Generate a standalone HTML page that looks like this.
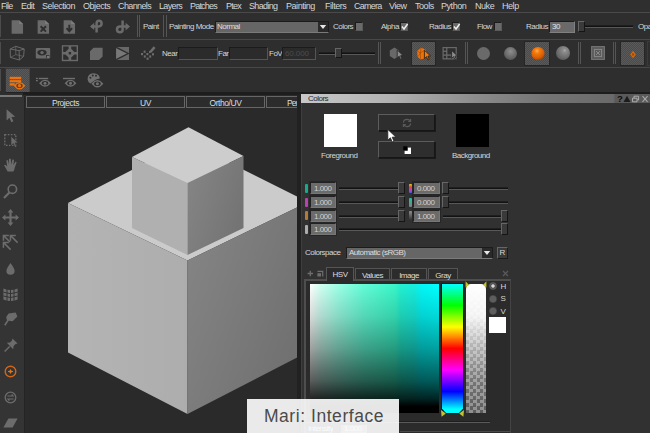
<!DOCTYPE html>
<html>
<head>
<meta charset="utf-8">
<title>Mari: Interface</title>
<style>
html,body{margin:0;padding:0;background:#2d2d2d;overflow:hidden;}
body{width:650px;height:433px;overflow:hidden;position:relative;font-family:"Liberation Sans",sans-serif;font-size:8px;color:#d6d6d6;letter-spacing:-0.5px;}
#app{position:absolute;left:0;top:0;width:650px;height:433px;overflow:hidden;background:#2e2e2e;}
.abs{position:absolute;}
.t{position:absolute;white-space:nowrap;line-height:11px;height:11px;}
#menubar .t{top:1px !important;font-size:9px;letter-spacing:-0.45px;}
#viewport .tab .t{font-size:8.5px;letter-spacing:-0.45px;}
.hl{position:absolute;height:1px;}
.vl{position:absolute;width:1px;}
.inp{position:absolute;box-sizing:border-box;background:#2b2b2b;border:1px solid #1b1b1b;border-bottom-color:#555;border-right-color:#555;}
.cb{position:absolute;box-sizing:border-box;width:8px;height:9px;background:#6a6a6a;border:1px solid #1c1c1c;border-right-color:#5a5a5a;border-bottom-color:#5a5a5a;}
.grip{position:absolute;width:1px;background:#555;box-shadow:2px 0 0 #555;}
.sel{position:absolute;box-sizing:border-box;background:repeating-conic-gradient(#5a5a5a 0% 25%,#4b4b4b 0% 50%) 0 0/2px 2px;border:1px solid #262626;}
.spin{position:absolute;box-sizing:border-box;background:#6b6b6b;border:1px solid #222;border-bottom-color:#777;border-right-color:#777;color:#e4e4e4;height:12px;line-height:10px;padding-left:3px;padding-top:1px;font-size:8px;letter-spacing:-0.5px;color:#d0d0d0;box-shadow:0 0 0 1px #262626;}
.trk{position:absolute;height:1px;background:#121212;box-shadow:0 -1px 0 rgba(0,0,0,0.350),0 1px 0 #585858;}
.hnd{position:absolute;box-sizing:border-box;width:7px;height:12px;background:#3a3a3a;border:1px solid #151515;border-left-color:#666;border-top-color:#666;}
.tab{position:absolute;box-sizing:border-box;border:1px solid #666;background:#2c2c2c;text-align:center;color:#ddd;}
</style>
</head>
<body>
<div id="app">

<!-- ============ MENU BAR ============ -->
<div id="menubar" class="abs" style="left:0;top:0;width:650px;height:12px;background:#2f2f2f;">
<span class="t" style="left:1px;top:0;letter-spacing:-0.75px">File</span>
<span class="t" style="left:21px;top:0;letter-spacing:-0.6px">Edit</span>
<span class="t" style="left:42px;top:0">Selection</span>
<span class="t" style="left:83px;top:0">Objects</span>
<span class="t" style="left:118px;top:0;letter-spacing:-0.62px">Channels</span>
<span class="t" style="left:159px;top:0;letter-spacing:-0.65px">Layers</span>
<span class="t" style="left:190px;top:0;letter-spacing:-0.8px">Patches</span>
<span class="t" style="left:226px;top:0;letter-spacing:-0.75px">Ptex</span>
<span class="t" style="left:249px;top:0;letter-spacing:-0.65px">Shading</span>
<span class="t" style="left:286px;top:0">Painting</span>
<span class="t" style="left:325px;top:0">Filters</span>
<span class="t" style="left:354px;top:0;letter-spacing:-0.75px">Camera</span>
<span class="t" style="left:389px;top:0">View</span>
<span class="t" style="left:415px;top:0">Tools</span>
<span class="t" style="left:441px;top:0">Python</span>
<span class="t" style="left:475px;top:0">Nuke</span>
<span class="t" style="left:502px;top:0">Help</span>
</div>
<div class="hl" style="left:0;top:12px;width:650px;background:#4a4a4a;"></div>

<!-- ============ TOOLBAR ROW 1 ============ -->
<div id="row1" class="abs" style="left:0;top:13px;width:650px;height:26px;background:#2e2e2e;">
 <div class="grip" style="left:0;top:2px;height:22px;box-shadow:none;background:#4c4c4c;"></div>
 <!-- doc icons -->
 <svg class="abs" style="left:10.3px;top:5.500px" width="15" height="16" viewBox="0 0 14 15"><path d="M1.5 1.2 H8.5 L12.2 4.8 V13.8 H1.5 Z" fill="#6a6a6a"/><path d="M8.5 1.2 V4.8 H12.2" fill="#7d7d7d"/></svg>
 <svg class="abs" style="left:36.3px;top:5.500px" width="15" height="16" viewBox="0 0 14 15"><path d="M1.5 1.2 H8.5 L12.2 4.8 V13.8 H1.5 Z" fill="#6a6a6a"/><path d="M8.5 1.2 V4.8 H12.2" fill="#7d7d7d"/><path d="M4.3 6.8 L9.3 11.8 M9.3 6.8 L4.3 11.8" stroke="#2e2e2e" stroke-width="1.8"/></svg>
 <svg class="abs" style="left:62.3px;top:5.500px" width="15" height="16" viewBox="0 0 14 15"><path d="M1.5 1.2 H8.5 L12.2 4.8 V13.8 H1.5 Z" fill="#6a6a6a"/><path d="M8.5 1.2 V4.8 H12.2" fill="#7d7d7d"/><path d="M6.8 5.5 V10.5 M4.2 8.6 L6.8 11.6 L9.4 8.6" stroke="#2e2e2e" stroke-width="1.8" fill="none"/></svg>
 <svg class="abs" style="left:89px;top:6px" width="15" height="15" viewBox="0 0 15 15"><path d="M7.6 13.5 V4.2 Q7.6 1.8 10 1.8 Q12.6 1.8 12.6 4.6 Q12.6 7.4 9.6 7.4 H2.2" stroke="#6a6a6a" stroke-width="2.500" fill="none"/><path d="M5.200 3.800 L1 7.400 L5.200 11 Z" fill="#6a6a6a"/></svg>
 <svg class="abs" style="left:114px;top:6px" width="17" height="15" viewBox="0 0 17 15"><path d="M8.6 1.5 V11 Q8.6 13.2 6 13.2 Q3 13.2 3 10.4 Q3 7.6 6 7.6 H13.5" stroke="#6a6a6a" stroke-width="2.500" fill="none"/><path d="M11.600 3.800 L16 7.600 L11.600 11.400 Z" fill="#6a6a6a"/></svg>
 <div class="grip" style="left:137px;top:2px;height:22px;"></div>
 <span class="t" style="left:143px;top:8px">Paint</span>
 <div class="grip" style="left:163px;top:2px;height:22px;box-shadow:3px 0 0 #555;"></div>
 <span class="t" style="left:169px;top:8px">Painting Mode</span>
 <div class="abs" style="left:215px;top:8px;width:114px;height:12px;box-sizing:border-box;background:#666;border:1px solid #1c1c1c;border-bottom-color:#7a7a7a;"></div>
 <span class="t" style="left:217px;top:8px;color:#ddd">Normal</span>
 <div class="abs" style="left:318px;top:9px;width:10px;height:10px;background:#2a2a2a;"></div>
 <svg class="abs" style="left:319px;top:11px" width="8" height="6" viewBox="0 0 8 6"><path d="M0.8 1 H7.2 L4 5 Z" fill="#e6e6e6"/></svg>
 <span class="t" style="left:333px;top:8px">Colors</span>
 <div class="cb" style="left:355px;top:9px"></div>
 <span class="t" style="left:381px;top:8px">Alpha</span>
 <div class="cb" style="left:400px;top:9px"></div>
 <svg class="abs" style="left:401px;top:10px" width="8" height="8" viewBox="0 0 8 8"><path d="M1 3.6 L3 6 L6.6 1" stroke="#eee" stroke-width="1.5" fill="none"/></svg>
 <span class="t" style="left:429px;top:8px">Radius</span>
 <div class="cb" style="left:452px;top:9px"></div>
 <svg class="abs" style="left:453px;top:10px" width="8" height="8" viewBox="0 0 8 8"><path d="M1 3.6 L3 6 L6.6 1" stroke="#eee" stroke-width="1.5" fill="none"/></svg>
 <span class="t" style="left:477px;top:8px">Flow</span>
 <div class="cb" style="left:494px;top:9px"></div>
 <span class="t" style="left:526px;top:8px">Radius</span>
 <div class="abs" style="left:549px;top:8px;width:26px;height:12px;box-sizing:border-box;background:#6a6a6a;border:1px solid #1c1c1c;border-bottom-color:#808080;border-right-color:#808080;"></div>
 <span class="t" style="left:552px;top:8px;color:#e2e2e2">30</span>
 <div class="trk" style="left:585px;top:13px;width:48px;"></div>
 <div class="hnd" style="left:578px;top:8px;height:11px;"></div>
 <span class="t" style="left:638px;top:8px;width:12px;overflow:hidden">Opa</span>
</div>
<div class="hl" style="left:0;top:39px;width:650px;background:#484848;"></div>

<!-- ============ TOOLBAR ROW 2 ============ -->
<div id="row2" class="abs" style="left:0;top:40px;width:650px;height:26px;background:#2e2e2e;">
 <div class="grip" style="left:0;top:2px;height:22px;box-shadow:none;background:#4c4c4c;"></div>
 <!-- wire cube -->
 <svg class="abs" style="left:8px;top:4px" width="19" height="19" viewBox="8 44 19 19"><g stroke="#6c6c6c" stroke-width="0.950" fill="none" stroke-linejoin="round"><path d="M15.700 46.300 L24.200 49 L19.100 50.600 L10.200 49 Z"/><path d="M10.200 49 L10.400 57.400 L19.400 60 L23.600 56.400 L24.200 49"/><path d="M19.100 50.600 L19.400 60"/><path d="M15.700 46.300 L15.800 54.600 L10.400 57.400 M15.800 54.600 L23.600 56.400" stroke-width="0.700"/></g></svg>
 <!-- camera eye -->
 <svg class="abs" style="left:35px;top:7px" width="16" height="13" viewBox="0 0 16 13"><rect x="0.8" y="1" width="14.4" height="10.6" rx="1" fill="#6a6a6a"/><ellipse cx="7" cy="5.6" rx="4.6" ry="2.8" fill="#2e2e2e"/><circle cx="7" cy="5.6" r="1.7" fill="#6a6a6a"/><rect x="11" y="8" width="3.4" height="3" fill="#2e2e2e"/><rect x="11.8" y="8.8" width="2.6" height="2.2" fill="#777"/></svg>
 <!-- frame icon -->
 <svg class="abs" style="left:60px;top:4px" width="20" height="19" viewBox="60 44 20 19"><rect x="61.800" y="45.200" width="16.200" height="16" fill="#6a6a6a"/><g fill="#2e2e2e"><path d="M63.200 46.600 H68.600 V48.800 L65.400 52 H63.200 Z"/><path d="M76.600 46.600 H71.200 V48.800 L74.400 52 H76.600 Z"/><path d="M63.200 59.800 H68.600 V57.600 L65.400 54.400 H63.200 Z"/><path d="M76.600 59.800 H71.200 V57.600 L74.400 54.400 H76.600 Z"/><rect x="68.700" y="52" width="2.400" height="2.400"/></g></svg>
 <!-- solid cube -->
 <svg class="abs" style="left:89px;top:7px" width="15" height="14" viewBox="0 0 15 14"><path d="M1 4.2 L4.6 0.8 H13.6 V9.4 L10 13 H1 Z" fill="#6a6a6a"/></svg>
 <!-- flag -->
 <svg class="abs" style="left:114px;top:5px" width="17" height="17" viewBox="114 45 17 17"><rect x="116.200" y="47" width="12.800" height="13" fill="#686868"/><path d="M116.200 47.800 L127.600 53.500 L116.200 59.200 Z" fill="#787878"/><path d="M116.200 47.400 L128.200 53.500 L116.200 59.600" stroke="#2e2e2e" stroke-width="1.400" fill="none"/></svg>
 <!-- dots brush -->
 <svg class="abs" style="left:139px;top:5px" width="18" height="17" viewBox="139 45 18 17"><g fill="#6c6c6c"><rect x="141" y="53" width="2" height="2.200"/><rect x="143.600" y="50.600" width="2" height="2.200"/><rect x="143.800" y="55.400" width="2" height="2.200"/><rect x="146.400" y="53" width="2" height="2.200"/><rect x="146.600" y="57.600" width="2" height="2.200"/><rect x="149.200" y="55.400" width="2" height="2.200"/><rect x="152" y="53.200" width="2" height="2.200"/><rect x="149" y="51" width="1.800" height="2"/></g><path d="M150.400 52 L154.600 47.200" stroke="#6c6c6c" stroke-width="2.600"/></svg>
 <span class="t" style="left:162px;top:8px">Near</span>
 <div class="inp" style="left:178px;top:7px;width:40px;height:13px;"></div>
 <span class="t" style="left:218px;top:8px">Far</span>
 <div class="inp" style="left:229px;top:7px;width:39px;height:13px;"></div>
 <span class="t" style="left:269px;top:8px">FoV</span>
 <div class="inp" style="left:282px;top:7px;width:34px;height:13px;"></div>
 <span class="t" style="left:285px;top:8px;color:#4c4c4c;letter-spacing:-0.1px">60.000</span>
 <div class="trk" style="left:319px;top:13px;width:56px;"></div>
 <div class="hnd" style="left:335px;top:8px;height:10px;"></div>
 <div class="grip" style="left:378px;top:2px;height:22px;"></div>
 <div class="sel" style="left:411px;top:1px;width:25px;height:25px;"></div>
 <div class="grip" style="left:465px;top:2px;height:22px;"></div>
 <div class="sel" style="left:524px;top:1px;width:26px;height:25px;"></div>
 <div class="grip" style="left:578px;top:2px;height:22px;"></div>
 <div class="grip" style="left:613px;top:2px;height:22px;"></div>
 <div class="sel" style="left:620px;top:1px;width:25px;height:25px;"></div>
 <div class="sel" style="left:647px;top:1px;width:3px;height:25px;background:#2e2e2e;border-color:#3a3a3a;border-right:none"></div>
 <!-- cursor icons -->
 <svg class="abs" style="left:385px;top:0" width="80" height="27" viewBox="385 40 80 27">
  <path d="M389.800 50.400 L394.400 47.400 L399 50.400 V56 L394.400 59 L389.800 56 Z" fill="#686868"/>
  <path d="M397.2 50.0 L397.2 58.0 L399.2 56.2 L400.6 59.5 L401.9 58.8 L400.6 55.7 L403.1 55.5 Z" fill="#8c8c8c" stroke="#2a2a2a" stroke-width="0.900"/>
  <path d="M417.200 51 L421 47.800 L425.500 49.400 L427 54 L425 58.200 L420.600 59.600 L417.600 57 Z" fill="#ec720c"/>
  <path d="M421 47.800 L420.400 53 L417.200 51 M420.400 53 L425.500 49.400 M420.400 53 L420.600 59.600 M420.400 53 L417.600 57" stroke="#9a4604" stroke-width="0.600" fill="none"/>
  <path d="M424.4 50.2 L424.4 58.6 L426.5 56.7 L427.9 60.1 L429.3 59.4 L427.9 56.1 L430.6 55.9 Z" fill="#f07a10" stroke="#3a2410" stroke-width="0.900"/>
  <rect x="442.500" y="47" width="14.300" height="12.500" fill="#686868"/>
  <g fill="#2e2e2e"><rect x="443.700" y="48.200" width="2.400" height="2.400"/><rect x="443.700" y="52" width="2.400" height="2.400"/><rect x="443.700" y="55.800" width="2.400" height="2.400"/><rect x="447.400" y="48.200" width="8.200" height="6.200"/><rect x="447.400" y="55.800" width="3.400" height="2.400"/></g>
  <path d="M451.6 50.4 L451.6 58.4 L453.6 56.6 L455.0 59.9 L456.3 59.2 L455.0 56.1 L457.5 55.9 Z" fill="#8c8c8c" stroke="#2a2a2a" stroke-width="0.900"/>
 </svg>
 <!-- spheres -->
 <svg class="abs" style="left:476px;top:6px" width="15" height="15" viewBox="0 0 15 15"><circle cx="7.5" cy="7.5" r="6.5" fill="#6a6a6a"/></svg>
 <svg class="abs" style="left:503px;top:6px" width="15" height="15" viewBox="0 0 15 15"><defs><radialGradient id="g2" cx="0.5" cy="0.35" r="0.65"><stop offset="0" stop-color="#8e8e8e"/><stop offset="1" stop-color="#565656"/></radialGradient></defs><circle cx="7.5" cy="7.5" r="6.5" fill="url(#g2)"/></svg>
 <svg class="abs" style="left:530px;top:6px" width="16" height="15" viewBox="0 0 16 15"><defs><radialGradient id="g3" cx="0.42" cy="0.3" r="0.7"><stop offset="0" stop-color="#ffb35a"/><stop offset="0.25" stop-color="#f57e10"/><stop offset="0.8" stop-color="#d85a00"/><stop offset="1" stop-color="#a84300"/></radialGradient></defs><circle cx="8" cy="7.5" r="6.6" fill="url(#g3)"/></svg>
 <svg class="abs" style="left:555px;top:5px" width="16" height="16" viewBox="0 0 16 16"><defs><radialGradient id="g4" cx="0.62" cy="0.32" r="0.7"><stop offset="0" stop-color="#acacac"/><stop offset="0.18" stop-color="#8c8c8c"/><stop offset="1" stop-color="#5c5c5c"/></radialGradient></defs><circle cx="8" cy="8" r="7" fill="url(#g4)"/></svg>
 <!-- square icon -->
 <svg class="abs" style="left:591px;top:6px" width="14" height="14" viewBox="0 0 14 14"><rect x="0.6" y="0.6" width="12.8" height="12.8" fill="#5a5a5a" stroke="#777" stroke-width="1"/><rect x="3.4" y="3.4" width="7.2" height="7.2" fill="none" stroke="#888" stroke-width="1"/><path d="M5 5 L9 9 M9 5 L5 9" stroke="#888" stroke-width="1"/></svg>
 <svg class="abs" style="left:629px;top:10px" width="8" height="9" viewBox="0 0 8 9"><path d="M4 0.800 L6.800 4.500 L4 8.200 L1.200 4.500 Z" fill="#d8680a"/><path d="M4 2.800 L5.200 4.500 L4 6.200 L2.800 4.500 Z" fill="#9a4a0a"/></svg>
</div>
<div class="hl" style="left:0;top:67px;width:650px;background:#484848;z-index:5;"></div>

<!-- ============ TOOLBAR ROW 3 ============ -->
<div id="row3" class="abs" style="left:0;top:67px;width:650px;height:27px;background:#2e2e2e;">
 <div class="grip" style="left:0;top:2px;height:22px;box-shadow:none;background:#4c4c4c;"></div>
 <div class="sel" style="left:5px;top:1px;width:25px;height:25px;border-color:#3a3a3a #444 #222 #333;"></div>
 <svg class="abs" style="left:0;top:0" width="120" height="27" viewBox="0 67 120 27">
  <g fill="#ee730e"><rect x="9.700" y="76.800" width="11.500" height="2.400"/><rect x="9.700" y="80.100" width="11.500" height="2.200"/><rect x="9.700" y="83.200" width="5" height="2.400"/></g>
  <path d="M13.7 85.7 Q19.5 78.3 25.3 85.7 Q19.5 93.10000000000001 13.7 85.7 Z" fill="#ee730e"/><ellipse cx="19.5" cy="85.7" rx="3.19" ry="2.29" fill="#6a3a14"/><circle cx="19.5" cy="85.7" r="1.6" fill="#ee730e"/>
  <g fill="#707070"><rect x="36" y="77.800" width="1.800" height="1.300"/><rect x="36" y="80" width="1.800" height="1.300"/><rect x="38.800" y="77.800" width="9.400" height="1.400"/></g>
  <path d="M39.1 83.2 Q45 76.3 50.9 83.2 Q45 90.10000000000001 39.1 83.2 Z" fill="#707070"/><ellipse cx="45" cy="83.2" rx="3.25" ry="2.14" fill="#2e2e2e"/><circle cx="45" cy="83.2" r="1.5" fill="#707070"/>
  <rect x="63" y="77.800" width="12" height="1.400" fill="#707070"/>
  <path d="M64.6 83.2 Q70.5 76.3 76.4 83.2 Q70.5 90.10000000000001 64.6 83.2 Z" fill="#707070"/><ellipse cx="70.5" cy="83.2" rx="3.25" ry="2.14" fill="#2e2e2e"/><circle cx="70.5" cy="83.2" r="1.5" fill="#707070"/>
  <path d="M87.600 79.600 Q87.400 73.600 93.400 73.200 Q99.600 73.400 99.800 78.600 L96 79.600 L92.400 82 L90.400 83.400 Q88 82.600 87.600 79.600 Z" fill="#707070"/>
  <g fill="#2e2e2e"><circle cx="90.400" cy="77.800" r="1"/><circle cx="92.800" cy="75.600" r="1"/><circle cx="96" cy="75.800" r="1"/></g>
  <path d="M91.4 83.8 Q97.4 76.39999999999999 103.4 83.8 Q97.4 91.2 91.4 83.8 Z" fill="#707070"/><ellipse cx="97.4" cy="83.8" rx="3.30" ry="2.29" fill="#2e2e2e"/><circle cx="97.4" cy="83.8" r="1.5" fill="#707070"/>
 </svg>
 <div class="abs" style="left:0;top:28px;width:22px;height:2px;background:#787878;z-index:6;"></div>
</div>
</div>
</div>

<div class="abs" style="left:23px;top:92px;width:627px;height:3px;background:#1d1d1d;"></div>
<!-- ============ VIEWPORT ============ -->
<div id="viewport" class="abs" style="left:25px;top:95px;width:276px;height:338px;background:#2a2a2a;overflow:hidden;">
 <svg class="abs" style="left:-25px;top:-95px" width="650" height="433" viewBox="0 0 650 433">
  <defs>
   <linearGradient id="rf" x1="0" y1="0" x2="1" y2="0.6"><stop offset="0" stop-color="#868686"/><stop offset="1" stop-color="#707070"/></linearGradient>
   <linearGradient id="rf2" x1="0" y1="0" x2="1" y2="0.5"><stop offset="0" stop-color="#868686"/><stop offset="1" stop-color="#747474"/></linearGradient>
   <linearGradient id="lf" x1="0" y1="0" x2="1" y2="0"><stop offset="0" stop-color="#b4b4b4"/><stop offset="1" stop-color="#adadad"/></linearGradient>
  </defs>
  <!-- big cube -->
  <path d="M68 203 L187 141.500 L308 202 L187.500 260.5 Z" fill="#cbcbcb"/>
  <path d="M68 203 L187.500 260.500 L187.5 414 L68 352.500 Z" fill="url(#lf)"/>
  <path d="M187.500 260.500 L308 202 L308 352 L187.500 414 Z" fill="url(#rf)"/>
  <!-- small cube -->
  <path d="M188.500 127.300 L243.500 156 L187.500 183 L132 157 Z" fill="#cdcdcd"/>
  <path d="M132 157 L187.500 183 L187.500 255 L132 228 Z" fill="#b0b0b0"/>
  <path d="M187.500 183 L243.500 156 L243.500 228 L187.500 255 Z" fill="url(#rf2)"/>
 </svg>
 <!-- tabs -->
 <div class="tab" style="left:1px;top:1px;width:79px;height:12px;"><span class="t" style="left:0;width:77px;top:1px;text-align:center">Projects</span></div>
 <div class="tab" style="left:81px;top:1px;width:79px;height:12px;"><span class="t" style="left:0;width:77px;top:1px;text-align:center">UV</span></div>
 <div class="tab" style="left:161px;top:1px;width:79px;height:12px;"><span class="t" style="left:0;width:77px;top:1px;text-align:center">Ortho/UV</span></div>
 <div class="tab" style="left:241px;top:1px;width:79px;height:12px;"><span class="t" style="left:20px;top:1px;letter-spacing:-0.800px">Persp</span></div>
</div>

<!-- ============ LEFT TOOLBAR ============ -->
<div id="lefttb" class="abs" style="left:0;top:96px;width:24px;height:337px;background:#343434;">
 <div class="vl" style="left:24px;top:0;height:337px;background:#242424;"></div>
 <!-- arrow y=115 -->
 <svg class="abs" style="left:4px;top:12px" width="14" height="16" viewBox="0 0 14 16"><path d="M2.6 1.2 L2.6 12.4 L5.4 9.8 L7.4 14.2 L9.4 13.3 L7.4 9 L11.2 8.800 Z" fill="#6c6c6c"/></svg>
 <!-- marquee y=140 -->
 <svg class="abs" style="left:2px;top:36px" width="17" height="17" viewBox="0 0 17 17"><rect x="2.800" y="2.600" width="11" height="10.800" fill="none" stroke="#6c6c6c" stroke-width="1.300" stroke-dasharray="1.600 1.400"/><path d="M9 4.200 L9 13.800 L11.300 11.600 L13 15.400 L14.700 14.600 L13 10.900 L16.200 10.700 Z" fill="#6c6c6c" stroke="#343434" stroke-width="0.600"/></svg>
 <!-- hand y=165 -->
 <svg class="abs" style="left:3px;top:61px" width="16" height="16" viewBox="0 0 16 16"><path d="M4.6 14.400 Q2.600 11 1.200 8.600 Q1.400 7.400 2.800 8 L4.200 9.600 L3.400 3.600 Q4.200 2.600 5 3.600 L5.800 7.600 L6 2 Q7 1 7.800 2 L8.200 7.400 L9.400 2.600 Q10.400 2 11 3 L10.400 8 L12.400 4.800 Q13.400 4.600 13.600 5.600 L11.800 10.400 Q11.400 13 10.400 14.400 Z" fill="#6c6c6c"/></svg>
 <!-- magnifier y=191 -->
 <svg class="abs" style="left:2px;top:87px" width="17" height="17" viewBox="0 0 17 17"><circle cx="10.400" cy="6.200" r="4.200" fill="none" stroke="#6c6c6c" stroke-width="1.600"/><path d="M7.400 9.400 L2 15" stroke="#6c6c6c" stroke-width="2.200"/></svg>
 <!-- move y=217 -->
 <svg class="abs" style="left:1px;top:112px" width="19" height="19" viewBox="0 0 19 19"><path d="M9.500 1 L12.400 4.400 H10.600 V8.400 H14.600 V6.600 L18 9.500 L14.600 12.400 V10.600 H10.600 V14.600 H12.400 L9.500 18 L6.600 14.600 H8.400 V10.600 H4.400 V12.400 L1 9.500 L4.400 6.600 V8.400 H8.400 V4.400 H6.600 Z" fill="#6c6c6c"/></svg>
 <!-- multi arrows y=242 -->
 <svg class="abs" style="left:2px;top:138px" width="17" height="17" viewBox="0 0 17 17"><g stroke="#6c6c6c" stroke-width="1.500" fill="none"><path d="M1.400 6.800 V1.400 H6.800 M1.600 1.600 L8 8"/><path d="M8.400 6.800 V1.400 H13.800 M8.600 1.600 L15.600 8.600"/><path d="M1.400 13.800 V8.400 H6.800 M1.600 8.600 L8.600 15.600"/></g></svg>
 <!-- drop y=269 -->
 <svg class="abs" style="left:5px;top:166px" width="11" height="14" viewBox="0 0 11 14"><path d="M5.500 1 Q9.600 6.600 9.600 9 Q9.600 12.800 5.500 12.800 Q1.400 12.800 1.400 9 Q1.400 6.600 5.500 1 Z" fill="#6c6c6c"/></svg>
 <!-- grid y=294 -->
 <svg class="abs" style="left:2px;top:190px" width="17" height="17" viewBox="0 0 17 17"><path d="M1.400 2.400 Q8.500 5.400 15.600 2.400 V13.600 Q8.500 16.600 1.400 13.600 Z" fill="#6c6c6c"/><g stroke="#343434" stroke-width="1" fill="none"><path d="M1.400 6.200 Q8.500 9.200 15.600 6.200 M1.400 10 Q8.500 13 15.600 10 M5 3 V15 M8.500 3.600 V15.600 M12 3 V15"/></g></svg>
 <!-- paint tag y=319 -->
 <svg class="abs" style="left:3px;top:215px" width="16" height="16" viewBox="0 0 16 16"><path d="M5.600 2.400 L12.600 1.400 L14.400 5.600 L9.600 10.200 L4 9.600 L3.200 6 Z" fill="#6c6c6c"/><path d="M5.200 9 L1.800 14.200" stroke="#6c6c6c" stroke-width="1.600"/></svg>
 <!-- pin y=345 -->
 <svg class="abs" style="left:3px;top:241px" width="16" height="16" viewBox="0 0 16 16"><path d="M9.400 1.400 L14.600 6.600 L12.600 7 L10.600 9 L10.200 12.200 L3.800 5.800 L7 5.400 L9 3.400 Z" fill="#6c6c6c"/><path d="M6.600 9.400 L1.600 14.400" stroke="#6c6c6c" stroke-width="1.400"/></svg>
 <!-- orange circle y=371 -->
 <svg class="abs" style="left:3px;top:268px" width="15" height="15" viewBox="0 0 15 15"><circle cx="7.500" cy="7.500" r="5.300" fill="none" stroke="#d0661a" stroke-width="1.400"/><path d="M7.500 5 L9 7.500 L7.500 10 L6 7.500 Z" fill="#e8710c"/><path d="M5 7.500 H10" stroke="#e8710c" stroke-width="1"/></svg>
 <!-- gray circle y=397 -->
 <svg class="abs" style="left:3px;top:294px" width="15" height="15" viewBox="0 0 15 15"><circle cx="7.500" cy="7.500" r="5.300" fill="none" stroke="#6c6c6c" stroke-width="1.300"/><path d="M4.400 6 H10 L8.600 4.400 M10.600 9 H5 L6.400 10.600" stroke="#6c6c6c" stroke-width="1.200" fill="none"/></svg>
 <!-- eraser y=423 -->
 <svg class="abs" style="left:2px;top:321px" width="17" height="12" viewBox="0 0 17 12"><path d="M6.400 1.400 H15.600 L10.600 10.600 H1.400 Z" fill="#6c6c6c"/></svg>
</div>

<!-- ============ COLORS PANEL ============ -->
<div id="colors" class="abs" style="left:296px;top:93px;width:354px;height:340px;">
 <div class="abs" style="left:1px;top:1px;width:353px;height:339px;background:#313131;"></div>
 <div class="abs" style="left:1px;top:1px;width:4px;height:339px;background:#212121;"></div>
 <div class="vl" style="left:5px;top:1px;height:339px;background:#3e3e3e;"></div>
 <!-- title bar -->
 <div class="abs" style="left:5px;top:1px;width:349px;height:9px;background:linear-gradient(90deg,#c8c8c8 0%,#b2b2b2 25%,#8c8c8c 50%,#747474 70%,#6a6a6a 89.500%,#5a5a5a 90%,#5a5a5a 100%);"></div>
 <span class="t" style="left:12px;top:0;color:#2a2a2a;">Colors</span>
 <span class="t" style="left:321px;top:0;color:#0c0c0c;font-weight:bold;font-size:9.500px;letter-spacing:0">?</span>
 <svg class="abs" style="left:327px;top:2px" width="26" height="8" viewBox="0 0 26 8"><path d="M0.500 7 L4 0.800 L7.500 7 Z" fill="#1c1c1c"/><g stroke="#b4b4b4" stroke-width="0.900" fill="none"><path d="M9.500 3.200 H14 V6.800 H9.500 Z M11 3 V1.200 H15.600 V5 H14.200"/><path d="M19.500 1.200 L24.600 6.800 M24.600 1.200 L19.500 6.800" stroke="#a8a8a8" stroke-width="1.100"/></g></svg>
 <!-- swatches -->
 <div class="abs" style="left:28px;top:21px;width:33px;height:33px;background:#fff;"></div>
 <span class="t" style="left:25px;top:57px;">Foreground</span>
 <div class="abs" style="left:160px;top:21px;width:33px;height:33px;background:#000;"></div>
 <span class="t" style="left:156px;top:57px;">Background</span>
 <div class="abs" style="left:82px;top:21px;width:57px;height:17px;box-sizing:border-box;background:#2e2e2e;border:1px solid #5c5c5c;border-right-color:#161616;border-bottom-color:#161616;box-shadow:1px 1px 0 #1a1a1a;"></div>
 <div class="abs" style="left:82px;top:48px;width:57px;height:17px;box-sizing:border-box;background:#2e2e2e;border:1px solid #5c5c5c;border-right-color:#161616;border-bottom-color:#161616;box-shadow:1px 1px 0 #1a1a1a;"></div>
 <svg class="abs" style="left:106px;top:25px" width="10" height="10" viewBox="0 0 10 10"><g stroke="#5a5a5a" stroke-width="1.200" fill="none"><path d="M1.400 4.600 Q1.600 1.600 5 1.400 Q7.400 1.400 8.400 3.200 M8.600 5.400 Q8.400 8.400 5 8.600 Q2.600 8.600 1.600 6.800"/><path d="M8.600 1 V3.400 H6.200 M1.400 9 V6.600 H3.800"/></g></svg>
 <svg class="abs" style="left:106px;top:52px" width="10" height="10" viewBox="0 0 10 10"><rect x="2.600" y="2.600" width="6.400" height="6.400" fill="#fff"/><rect x="1" y="1" width="4.600" height="4.600" fill="#000" stroke="#2d2d2d" stroke-width="0.600"/></svg>
 <!-- cursor -->
 <svg class="abs" style="left:90px;top:35px" width="12" height="16" viewBox="0 0 12 16"><path d="M1.800 1.400 L1.800 12.200 L4.400 9.800 L6.200 14 L8 13.200 L6.200 9.200 L9.800 9 Z" fill="#fff" stroke="#222" stroke-width="0.800"/></svg>
 <!-- sliders -->
 <div class="abs" style="left:9px;top:90px;width:3px;height:9px;border-radius:1px;margin-top:0.500px;background:#1aa98a;"></div>
 <div class="spin" style="left:14px;top:89px;width:26px;">1.000</div>
 <div class="trk" style="left:43px;top:95px;width:62px;"></div>
 <div class="hnd" style="left:102px;top:89px;"></div>
 <div class="abs" style="left:9px;top:104px;width:3px;height:9px;border-radius:1px;margin-top:0.500px;background:#b843b0;"></div>
 <div class="spin" style="left:14px;top:103px;width:26px;">1.000</div>
 <div class="trk" style="left:43px;top:109px;width:62px;"></div>
 <div class="hnd" style="left:102px;top:103px;"></div>
 <div class="abs" style="left:9px;top:117.5px;width:3px;height:9px;border-radius:1px;margin-top:0.500px;background:#b47a3a;"></div>
 <div class="spin" style="left:14px;top:116.5px;width:26px;">1.000</div>
 <div class="trk" style="left:43px;top:122.5px;width:62px;"></div>
 <div class="hnd" style="left:102px;top:116.5px;"></div>
 <div class="abs" style="left:9px;top:131px;width:3px;height:9px;border-radius:1px;margin-top:0.500px;background:#acacac;"></div>
 <div class="spin" style="left:14px;top:130px;width:26px;">1.000</div>
 <div class="trk" style="left:43px;top:136px;width:165px;"></div>
 <div class="hnd" style="left:205px;top:130px;"></div>
 <div class="abs" style="left:113px;top:90px;width:3px;height:9px;border-radius:1px;margin-top:0.500px;background:linear-gradient(#e8d020,#e04040,#c040d0,#4060e0);"></div>
 <div class="spin" style="left:117px;top:89px;width:27px;">0.000</div>
 <div class="trk" style="left:152px;top:95px;width:60px;"></div>
 <div class="hnd" style="left:146px;top:89px;"></div>
 <div class="abs" style="left:113px;top:104px;width:3px;height:9px;border-radius:1px;margin-top:0.500px;background:linear-gradient(#20c0a0,#808080);"></div>
 <div class="spin" style="left:117px;top:103px;width:27px;">0.000</div>
 <div class="trk" style="left:152px;top:109px;width:60px;"></div>
 <div class="hnd" style="left:146px;top:103px;"></div>
 <div class="abs" style="left:113px;top:117.5px;width:3px;height:9px;border-radius:1px;margin-top:0.500px;background:linear-gradient(#909090,#303030);"></div>
 <div class="spin" style="left:117px;top:116.5px;width:27px;">1.000</div>
 <div class="trk" style="left:147px;top:122.5px;width:60px;"></div>
 <div class="hnd" style="left:205px;top:116.5px;"></div>

 <!-- colorspace -->
 <span class="t" style="left:9px;top:154px;">Colorspace</span>
 <div class="abs" style="left:50px;top:154px;width:147px;height:12px;box-sizing:border-box;background:#666;border:1px solid #1c1c1c;border-bottom-color:#7a7a7a;"></div>
 <span class="t" style="left:53px;top:154px;color:#ddd">Automatic (sRGB)</span>
 <div class="abs" style="left:186px;top:155px;width:10px;height:10px;background:#2a2a2a;"></div>
 <svg class="abs" style="left:187px;top:157px" width="8" height="6" viewBox="0 0 8 6"><path d="M0.800 1 H7.200 L4 5 Z" fill="#e6e6e6"/></svg>
 <div class="abs" style="left:201px;top:154px;width:11px;height:12px;box-sizing:border-box;background:#3a3a3a;border:1px solid #666;border-right-color:#1a1a1a;border-bottom-color:#1a1a1a;"></div>
 <span class="t" style="left:203.5px;top:154px;">R</span>
 <!-- tabs -->
 <svg class="abs" style="left:11px;top:177px" width="18" height="8" viewBox="0 0 18 8"><path d="M3.300 0.800 V6.200 M0.600 3.500 H6" stroke="#6e6e6e" stroke-width="1.300" fill="none"/><path d="M10.500 1.300 H15.700 V6.500" stroke="#6e6e6e" stroke-width="1.200" fill="none"/><rect x="10.400" y="3.200" width="3.600" height="3.300" fill="#6e6e6e"/></svg>
 <div class="abs" style="left:8px;top:186px;width:207px;height:154px;box-sizing:border-box;border:2px solid #4e4e4e;border-right:1px solid #444;border-bottom:none;background:#2b2b2b;"></div>
 <div class="tab" style="left:30px;top:174px;width:28px;height:14px;background:#2b2b2b;border-color:#565656;border-bottom:none;"><span class="t" style="left:0;width:26px;top:1px;text-align:center">HSV</span></div>
 <div class="tab" style="left:59px;top:175px;width:35px;height:11px;border-color:#545454;border-bottom:none;"><span class="t" style="left:0;width:33px;top:1px;text-align:center">Values</span></div>
 <div class="tab" style="left:95px;top:175px;width:36px;height:11px;border-color:#545454;border-bottom:none;"><span class="t" style="left:0;width:34px;top:1px;text-align:center">Image</span></div>
 <div class="tab" style="left:132px;top:175px;width:30px;height:11px;border-color:#545454;border-bottom:none;"><span class="t" style="left:0;width:28px;top:1px;text-align:center">Gray</span></div>
 <svg class="abs" style="left:206px;top:177px" width="7" height="7" viewBox="0 0 7 7"><path d="M1 1 L6 6 M6 1 L1 6" stroke="#5a5a5a" stroke-width="1.200"/></svg>
 <!-- SV square -->
 <div class="abs" style="left:14px;top:191px;width:129px;height:129px;background:linear-gradient(to bottom,rgba(0,0,0,0) 0%,rgba(0,0,0,0.150) 25%,rgba(0,0,0,0.370) 50%,rgba(0,0,0,0.640) 75%,rgba(0,0,0,0.860) 89%,rgba(0,0,0,1) 95%),linear-gradient(to right,#ffffff 0%,#d0fff2 8%,#9cffe6 22%,#62fcd6 42%,#3af6c8 66%,#24f0d0 70%,#16eede 81%,#04f6f6 86%,#00ffff 100%);"></div>
 <!-- hue strip -->
 <div class="abs" style="left:145px;top:190px;width:23px;height:131px;background:#1c1c1c;clip-path:polygon(0 0,100% 0,100% 96.500%,82% 100%,18% 100%,0 96.500%);"></div>
 <div class="abs" style="left:146px;top:191px;width:21px;height:129px;background:linear-gradient(to bottom,#00ffff 0%,#00ff00 16.600%,#ffff00 33.300%,#ff0000 50%,#ff00ff 66.600%,#0000ff 83.300%,#00ffff 97%,#00ffff 100%);clip-path:polygon(0 0,100% 0,100% 96.500%,81% 100%,19% 100%,0 96.500%);"></div>
 <svg class="abs" style="left:144px;top:315px" width="25" height="10" viewBox="440 408 25 10"><path d="M441 410 L445.800 413.600 L441.600 416.800 Z M464 410 L459.200 413.600 L463.400 416.800 Z" fill="#c4c428"/></svg>
 <!-- alpha strip -->
 <div class="abs" style="left:170px;top:191px;width:20px;height:129px;border-radius:5px 5px 0 0;background:linear-gradient(to bottom,rgba(255,255,255,1) 0%,rgba(255,255,255,0.920) 25%,rgba(255,255,255,0.500) 50%,rgba(255,255,255,0.160) 75%,rgba(255,255,255,0) 100%),repeating-conic-gradient(#909090 0% 25%,#5c5c5c 0% 50%) 0 0/7px 7px;"></div>
 <svg class="abs" style="left:168px;top:187px" width="25" height="9" viewBox="464 280 25 9"><path d="M465.600 281.200 L469 285 L465.600 287.400 Z M486.400 281.200 L483 285 L486.400 287.400 Z" fill="#c4c428"/></svg>
 <!-- radios -->
 <div class="abs" style="left:193px;top:189px;width:8px;height:8px;border-radius:50%;background:radial-gradient(circle at 50% 50%,#e0e0e0 0,#d0d0d0 1.300px,#4a4a4a 2.200px,#606060 3.200px,#3c3c3c 4px);"></div>
 <div class="abs" style="left:193px;top:202px;width:8px;height:8px;border-radius:50%;background:radial-gradient(circle at 50% 50%,#5e5e5e 0,#5e5e5e 2.800px,#3c3c3c 4px);"></div>
 <div class="abs" style="left:193px;top:214px;width:8px;height:8px;border-radius:50%;background:radial-gradient(circle at 50% 50%,#5e5e5e 0,#5e5e5e 2.800px,#3c3c3c 4px);"></div>
 <span class="t" style="left:204.5px;top:188px;">H</span>
 <span class="t" style="left:204.5px;top:200px;">S</span>
 <span class="t" style="left:204.5px;top:213px;">V</span>
 <div class="abs" style="left:193px;top:224px;width:17px;height:16px;background:#fff;"></div>
 <div class="hl" style="left:10px;top:329px;width:184px;background:#5a5a5a;box-shadow:0 -1px 0 #1e1e1e;"></div>
 <div class="hl" style="left:104px;top:338px;width:110px;background:#4a4a4a;"></div>
 <span class="t" style="left:12px;top:330px;height:10px;overflow:hidden">Intensity</span>
 <div class="spin" style="left:44px;top:331px;width:27px;height:9px;line-height:8px;padding-top:0;overflow:hidden">1.000</div>
</div>

<!-- ============ CAPTION ============ -->
<div id="caption" class="abs" style="left:247px;top:399px;width:152px;height:34px;background:rgba(255,255,255,0.9);color:#4a4a4a;font-size:17.5px;letter-spacing:0.550px;line-height:34px;text-align:center;text-indent:2px;">Mari: Interface</div>

</div>
</body>
</html>
